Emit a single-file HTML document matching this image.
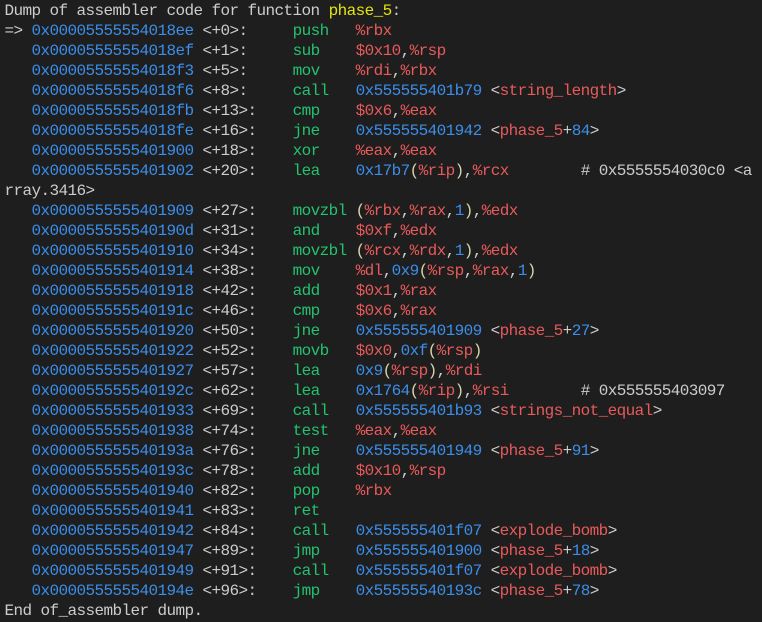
<!DOCTYPE html>
<html><head><meta charset="utf-8"><style>
html,body{margin:0;padding:0;background:#1e1e1e;width:762px;height:622px;overflow:hidden}
pre{margin:0;padding:0.5px 0 0 4.5px;font-family:"Liberation Mono",monospace;font-size:16px;letter-spacing:-0.6px;line-height:20px;color:#cccccc;white-space:pre}
.a{color:#3b8eea}.m{color:#23c26f}.r{color:#e85a5a}.p{color:#d8d6a8}.y{color:#e5e510}
</style></head><body><pre>Dump of assembler code for function <span class="y">phase_5</span>:
=&gt; <span class="a">0x00005555554018ee</span> &lt;+0&gt;:     <span class="m">push</span>   <span class="r">%rbx</span>
   <span class="a">0x00005555554018ef</span> &lt;+1&gt;:     <span class="m">sub</span>    <span class="r">$0x10</span>,<span class="r">%rsp</span>
   <span class="a">0x00005555554018f3</span> &lt;+5&gt;:     <span class="m">mov</span>    <span class="r">%rdi</span>,<span class="r">%rbx</span>
   <span class="a">0x00005555554018f6</span> &lt;+8&gt;:     <span class="m">call</span>   <span class="a">0x555555401b79</span> &lt;<span class="r">string_length</span>&gt;
   <span class="a">0x00005555554018fb</span> &lt;+13&gt;:    <span class="m">cmp</span>    <span class="r">$0x6</span>,<span class="r">%eax</span>
   <span class="a">0x00005555554018fe</span> &lt;+16&gt;:    <span class="m">jne</span>    <span class="a">0x555555401942</span> &lt;<span class="r">phase_5</span>+<span class="a">84</span>&gt;
   <span class="a">0x0000555555401900</span> &lt;+18&gt;:    <span class="m">xor</span>    <span class="r">%eax</span>,<span class="r">%eax</span>
   <span class="a">0x0000555555401902</span> &lt;+20&gt;:    <span class="m">lea</span>    <span class="a">0x17b7</span><span class="p">(</span><span class="r">%rip</span><span class="p">)</span>,<span class="r">%rcx</span>        # 0x5555554030c0 &lt;a
rray.3416&gt;
   <span class="a">0x0000555555401909</span> &lt;+27&gt;:    <span class="m">movzbl</span> <span class="p">(</span><span class="r">%rbx</span>,<span class="r">%rax</span>,<span class="a">1</span><span class="p">)</span>,<span class="r">%edx</span>
   <span class="a">0x000055555540190d</span> &lt;+31&gt;:    <span class="m">and</span>    <span class="r">$0xf</span>,<span class="r">%edx</span>
   <span class="a">0x0000555555401910</span> &lt;+34&gt;:    <span class="m">movzbl</span> <span class="p">(</span><span class="r">%rcx</span>,<span class="r">%rdx</span>,<span class="a">1</span><span class="p">)</span>,<span class="r">%edx</span>
   <span class="a">0x0000555555401914</span> &lt;+38&gt;:    <span class="m">mov</span>    <span class="r">%dl</span>,<span class="a">0x9</span><span class="p">(</span><span class="r">%rsp</span>,<span class="r">%rax</span>,<span class="a">1</span><span class="p">)</span>
   <span class="a">0x0000555555401918</span> &lt;+42&gt;:    <span class="m">add</span>    <span class="r">$0x1</span>,<span class="r">%rax</span>
   <span class="a">0x000055555540191c</span> &lt;+46&gt;:    <span class="m">cmp</span>    <span class="r">$0x6</span>,<span class="r">%rax</span>
   <span class="a">0x0000555555401920</span> &lt;+50&gt;:    <span class="m">jne</span>    <span class="a">0x555555401909</span> &lt;<span class="r">phase_5</span>+<span class="a">27</span>&gt;
   <span class="a">0x0000555555401922</span> &lt;+52&gt;:    <span class="m">movb</span>   <span class="r">$0x0</span>,<span class="a">0xf</span><span class="p">(</span><span class="r">%rsp</span><span class="p">)</span>
   <span class="a">0x0000555555401927</span> &lt;+57&gt;:    <span class="m">lea</span>    <span class="a">0x9</span><span class="p">(</span><span class="r">%rsp</span><span class="p">)</span>,<span class="r">%rdi</span>
   <span class="a">0x000055555540192c</span> &lt;+62&gt;:    <span class="m">lea</span>    <span class="a">0x1764</span><span class="p">(</span><span class="r">%rip</span><span class="p">)</span>,<span class="r">%rsi</span>        # 0x555555403097
   <span class="a">0x0000555555401933</span> &lt;+69&gt;:    <span class="m">call</span>   <span class="a">0x555555401b93</span> &lt;<span class="r">strings_not_equal</span>&gt;
   <span class="a">0x0000555555401938</span> &lt;+74&gt;:    <span class="m">test</span>   <span class="r">%eax</span>,<span class="r">%eax</span>
   <span class="a">0x000055555540193a</span> &lt;+76&gt;:    <span class="m">jne</span>    <span class="a">0x555555401949</span> &lt;<span class="r">phase_5</span>+<span class="a">91</span>&gt;
   <span class="a">0x000055555540193c</span> &lt;+78&gt;:    <span class="m">add</span>    <span class="r">$0x10</span>,<span class="r">%rsp</span>
   <span class="a">0x0000555555401940</span> &lt;+82&gt;:    <span class="m">pop</span>    <span class="r">%rbx</span>
   <span class="a">0x0000555555401941</span> &lt;+83&gt;:    <span class="m">ret</span>
   <span class="a">0x0000555555401942</span> &lt;+84&gt;:    <span class="m">call</span>   <span class="a">0x555555401f07</span> &lt;<span class="r">explode_bomb</span>&gt;
   <span class="a">0x0000555555401947</span> &lt;+89&gt;:    <span class="m">jmp</span>    <span class="a">0x555555401900</span> &lt;<span class="r">phase_5</span>+<span class="a">18</span>&gt;
   <span class="a">0x0000555555401949</span> &lt;+91&gt;:    <span class="m">call</span>   <span class="a">0x555555401f07</span> &lt;<span class="r">explode_bomb</span>&gt;
   <span class="a">0x000055555540194e</span> &lt;+96&gt;:    <span class="m">jmp</span>    <span class="a">0x55555540193c</span> &lt;<span class="r">phase_5</span>+<span class="a">78</span>&gt;
End of_assembler dump.</pre></body></html>
